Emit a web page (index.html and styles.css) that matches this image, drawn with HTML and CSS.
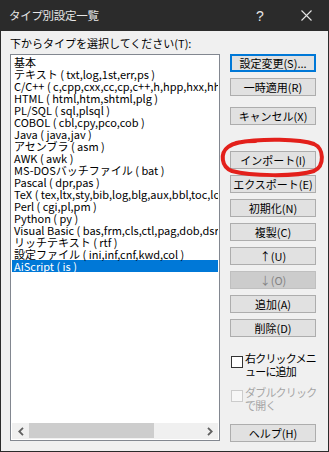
FILE: index.html
```html
<!DOCTYPE html>
<html lang="ja">
<head>
<meta charset="utf-8">
<title>タイプ別設定一覧</title>
<link rel="stylesheet" href="styles.css">
</head>
<body>
<div class="window">
  <div class="titlebar">
    <span class="title">タイプ別設定一覧</span>
    <span class="caption-btn help">?</span>
    <span class="caption-btn close">
      <svg width="11" height="11" viewBox="0 0 11 11"><path d="M0.5 0.5 L10.5 10.5 M10.5 0.5 L0.5 10.5" stroke="#e6e6e6" stroke-width="1.1" fill="none"/></svg>
    </span>
  </div>
  <div class="body">
    <div class="left">
      <div class="label">下からタイプを選択してください(T):</div>
      <div class="listbox">
        <ul class="items">
          <li>基本</li>
          <li>テキスト ( txt,log,1st,err,ps )</li>
          <li>C/C++ ( c,cpp,cxx,cc,cp,c++,h,hpp,hxx,hh,</li>
          <li>HTML ( html,htm,shtml,plg )</li>
          <li>PL/SQL ( sql,plsql )</li>
          <li>COBOL ( cbl,cpy,pco,cob )</li>
          <li>Java ( java,jav )</li>
          <li>アセンブラ ( asm )</li>
          <li>AWK ( awk )</li>
          <li>MS-DOSバッチファイル ( bat )</li>
          <li>Pascal ( dpr,pas )</li>
          <li>TeX ( tex,ltx,sty,bib,log,blg,aux,bbl,toc,lof,</li>
          <li>Perl ( cgi,pl,pm )</li>
          <li>Python ( py )</li>
          <li>Visual Basic ( bas,frm,cls,ctl,pag,dob,dsr</li>
          <li>リッチテキスト ( rtf )</li>
          <li>設定ファイル ( ini,inf,cnf,kwd,col )</li>
          <li class="selected">AiScript ( is )</li>
        </ul>
        <div class="hscroll">
          <span class="sb-arrow">
            <svg width="6" height="9" viewBox="0 0 6 9"><path d="M5 0.8 L1.3 4.5 L5 8.2" stroke="#606060" stroke-width="1.8" fill="none"/></svg>
          </span>
          <span class="sb-track"><span class="sb-thumb"></span></span>
          <span class="sb-arrow">
            <svg width="6" height="9" viewBox="0 0 6 9"><path d="M1 0.8 L4.7 4.5 L1 8.2" stroke="#606060" stroke-width="1.8" fill="none"/></svg>
          </span>
        </div>
      </div>
    </div>
    <div class="right">
      <button class="btn default">設定変更(S)...</button>
      <button class="btn">一時適用(R)</button>
      <button class="btn cancel">キャンセル(X)</button>
      <button class="btn section">インポート(I)</button>
      <button class="btn">エクスポート(E)</button>
      <button class="btn">初期化(N)</button>
      <button class="btn">複製(C)</button>
      <button class="btn">↑(U)</button>
      <button class="btn disabled">↓(O)</button>
      <button class="btn">追加(A)</button>
      <button class="btn">削除(D)</button>
      <div class="check">
        <span class="box"></span>
        <span class="check-label">右クリックメニ<br>ューに追加</span>
      </div>
      <div class="check disabled">
        <span class="box"></span>
        <span class="check-label">ダブルクリック<br>で開く</span>
      </div>
      <button class="btn help-btn">ヘルプ(H)</button>
    </div>
  </div>
  <svg class="annotation" width="329" height="452" viewBox="0 0 329 452">
    <path d="M236 143 C262 138, 300 139, 314 144 C324 148, 325 166, 314 171 C296 177, 250 176, 232 171 C221 167, 220 153, 228 147 C233 143, 244 141, 256 141" stroke="#e3201b" stroke-width="4" fill="none" stroke-linecap="round" stroke-linejoin="round"/>
  </svg>
</div>
</body>
</html>
```

FILE: styles.css
```css
* {
  box-sizing: border-box;
  margin: 0;
  padding: 0;
}

html, body {
  width: 329px;
  height: 452px;
  overflow: hidden;
  background: #f0f0f0;
}

body {
  font-family: "Noto Sans CJK JP", "Noto Sans", sans-serif;
  font-size: 11px;
  color: #000;
}

.window {
  position: relative;
  width: 329px;
  height: 452px;
  border-left: 1px solid #2b2b2b;
  border-right: 1px solid #2b2b2b;
  border-bottom: 1px solid #2b2b2b;
  background: #f0f0f0;
  display: flex;
  flex-direction: column;
}

.titlebar {
  height: 31px;
  flex: none;
  background: #2b2b2b;
  color: #e6e6e6;
  display: flex;
  align-items: center;
}

.title {
  flex: 1;
  padding-left: 8px;
  font-size: 11.5px;
  line-height: 31px;
  letter-spacing: -0.3px;
}

.caption-btn {
  width: 46px;
  height: 31px;
  display: flex;
  align-items: center;
  justify-content: center;
}

.help {
  font-family: "Liberation Sans", sans-serif;
  font-size: 14px;
  padding-left: 2px;
  padding-top: 1px;
}

.close {
  padding-left: 3px;
}

.body {
  flex: 1;
  display: flex;
  gap: 10px;
  padding: 5px 0 0 9px;
}

.left {
  width: 210px;
  display: flex;
  flex-direction: column;
}

.label {
  height: 14px;
  line-height: 14px;
  white-space: nowrap;
}

.listbox {
  margin-top: 4px;
  height: 387px;
  border: 1px solid #828790;
  padding: 1px;
  background: #fff;
  display: flex;
  flex-direction: column;
}

.items {
  list-style: none;
  flex: 1;
  overflow: hidden;
}

.items li {
  height: 12px;
  line-height: 12px;
  padding-left: 2px;
  white-space: nowrap;
}

.items li.selected {
  background: #0078d7;
  color: #fff;
}

.hscroll {
  flex: none;
  height: 16px;
  background: #f0f0f0;
  display: flex;
}

.sb-arrow {
  width: 17px;
  display: flex;
  align-items: center;
  justify-content: center;
}

.sb-track {
  flex: 1;
}

.sb-thumb {
  display: block;
  width: 125px;
  height: 15px;
  background: #cdcdcd;
}

.right {
  width: 86px;
  padding-top: 18px;
  display: flex;
  flex-direction: column;
  gap: 6px;
}

.btn {
  display: block;
  width: 86px;
  height: 18px;
  border: 1px solid #adadad;
  background: #e1e1e1;
  font: inherit;
  line-height: 16px;
  text-align: center;
  white-space: nowrap;
  color: #000;
  padding: 0;
}

.btn.default {
  border: 2px solid #0078d7;
  line-height: 14px;
}

.btn.disabled {
  background: #cccccc;
  border-color: #bfbfbf;
  color: #838383;
}

.btn.cancel {
  margin-top: 5px;
}

.btn.section {
  margin-top: 20px;
}

.check {
  display: flex;
  align-items: flex-start;
  gap: 2px;
  line-height: 13px;
  margin-top: 9px;
  padding-left: 1px;
}

.check + .check {
  margin-top: 2px;
}

.check .box {
  flex: none;
  width: 12px;
  height: 12px;
  margin-top: 4px;
  border: 1px solid #333;
  background: #fff;
}

.check-label {
  white-space: nowrap;
  letter-spacing: -0.8px;
}

.check.disabled {
  color: #a6a6a6;
}

.check.disabled .box {
  border-color: #cccccc;
  background: #f7f7f7;
}

.btn.help-btn {
  margin-top: 6px;
}

.annotation {
  position: absolute;
  left: -1px;
  top: 0;
  pointer-events: none;
}
```
